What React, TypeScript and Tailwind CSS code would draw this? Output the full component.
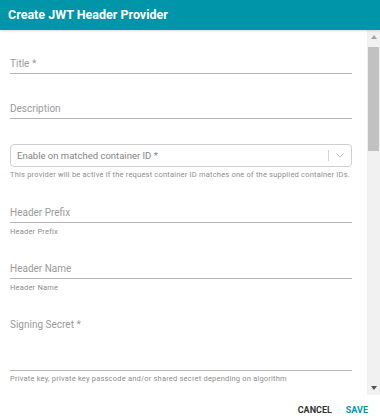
import React from "react";

type Field = {
  label: string;
  helper?: string;
  tall?: boolean;
};

const UnderlineField = ({ label, helper, tall }: Field) => (
  <div className="flex flex-col">
    <div
      className={`flex border-b border-[#b5b5b5] ${tall ? "h-[58px] items-start pt-[6px]" : "h-[22px] items-end pb-[3px]"}`}
    >
      <span className="text-[10px] leading-[12px] text-[#9a9a9a]">{label}</span>
    </div>
    {helper && (
      <div
        className={`${tall ? "mt-[3px]" : "mt-[4px]"} text-[7.5px] leading-[10px] text-[#8e8e8e] tracking-[0.2px] whitespace-nowrap`}
      >
        {helper}
      </div>
    )}
  </div>
);

const Scrollbar = () => (
  <div className="w-[13px] bg-[#f1f1f1] flex flex-col items-center">
    <div className="h-[14px] flex items-center justify-center">
      <div className="w-0 h-0 border-l-[3.5px] border-r-[3.5px] border-b-[4px] border-l-transparent border-r-transparent border-b-[#a3a3a3]" />
    </div>
    <div className="w-[11px] h-[104px] bg-[#c1c1c1] mt-[3px]" />
    <div className="flex-1" />
    <div className="h-[14px] flex items-center justify-center">
      <div className="w-0 h-0 border-l-[3.5px] border-r-[3.5px] border-t-[4px] border-l-transparent border-r-transparent border-t-[#505050]" />
    </div>
  </div>
);

export default function App() {
  return (
    <div className="w-[380px] h-[420px] flex flex-col bg-white font-['Roboto',sans-serif] overflow-hidden">
      <div className="h-[30px] shrink-0 bg-[#0095a8] flex items-center px-[8px] shadow-[0_1px_2px_rgba(0,0,0,0.15)] z-10">
        <h2 className="text-white text-[12.5px] leading-[16px] font-bold">Create JWT Header Provider</h2>
      </div>

      <div className="h-[365px] flex min-h-0">
        <div className="flex-1 pl-[10px] pr-[15px] pt-[22px] flex flex-col">
          <UnderlineField label="Title *" />
          <div className="h-[23px] shrink-0" />
          <UnderlineField label="Description" />

          <div className="mt-[25px] h-[23px] shrink-0 border border-[#cfcfcf] rounded-[4px] flex items-center pl-[6px]">
            <span className="flex-1 text-[9.5px] leading-[12px] text-[#858585]">Enable on matched container ID *</span>
            <div className="w-px h-[11px] bg-[#d5d5d5]" />
            <div className="w-[22px] flex items-center justify-center">
              <svg width="8" height="5" viewBox="0 0 8 5" fill="none">
                <path d="M0.5 0.5L4 4L7.5 0.5" stroke="#bbb" strokeWidth="0.9" />
              </svg>
            </div>
          </div>
          <div className="mt-[3px] text-[7.5px] leading-[10px] text-[#8e8e8e] tracking-[0.2px] whitespace-nowrap">
            This provider will be active if the request container ID matches one of the supplied container IDs.
          </div>

          <div className="h-[21px] shrink-0" />
          <UnderlineField label="Header Prefix" helper="Header Prefix" />
          <div className="h-[20px] shrink-0" />
          <UnderlineField label="Header Name" helper="Header Name" />
          <div className="h-[20px] shrink-0" />
          <UnderlineField
            label="Signing Secret *"
            helper="Private key, private key passcode and/or shared secret depending on algorithm"
            tall
          />
        </div>
        <Scrollbar />
      </div>

      <div className="h-[25px] shrink-0 flex items-start pt-[10px] justify-end gap-[14px] pr-[12px]">
        <button className="text-[9px] leading-[11px] font-bold text-[#333]">CANCEL</button>
        <button className="text-[9px] leading-[11px] font-bold text-[#0097a7]">SAVE</button>
      </div>
    </div>
  );
}
